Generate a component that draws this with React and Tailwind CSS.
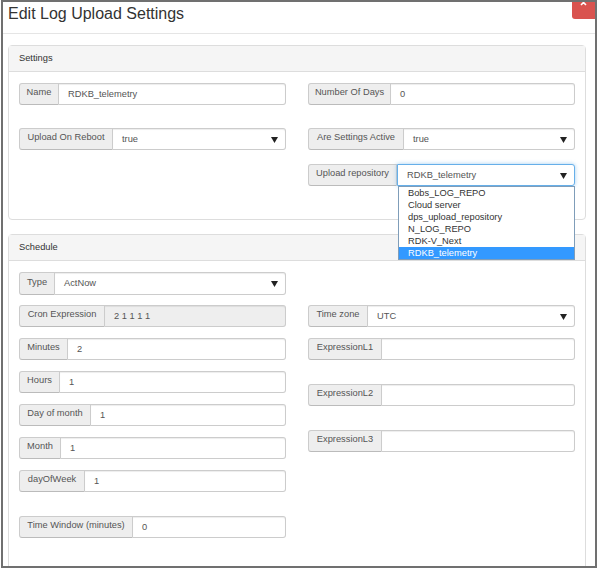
const repos = ['Bobs_LOG_REPO', 'Cloud server', 'dps_upload_repository', 'N_LOG_REPO', 'RDK-V_Next', 'RDKB_telemetry']

function Arrow() {
  return (
    <svg width="7" height="6" viewBox="0 0 7 6" className="shrink-0">
      <path d="M0 0 H7 L3.5 6 Z" fill="#222" />
    </svg>
  )
}

function Field({ label, w, value = '', select, readOnly, focus, className = '', children }) {
  const box = focus
    ? 'border border-[#66afe9] shadow-[0_0_4px_rgba(102,175,233,0.6)]'
    : 'border border-l-0 border-[#ccc] shadow-[inset_0_1px_1px_rgba(0,0,0,0.075)]'
  return (
    <div className={`flex h-[22px] w-[267px] text-[9.3px] text-[#555] ${className}`}>
      <div className={`flex shrink-0 items-center justify-center whitespace-nowrap rounded-l-[3px] border border-[#ccc] border-b-[#bbb] bg-[#eee] pb-[2px] ${w}`}>
        {label}
      </div>
      <div className={`relative flex flex-1 items-center rounded-r-[3px] pl-[9px] pr-[7px] pt-[1px] ${box} ${readOnly ? 'bg-[#eee]' : 'bg-white'}`}>
        <span className="flex-1 whitespace-nowrap">{value}</span>
        {select && <Arrow />}
        {children}
      </div>
    </div>
  )
}

function Panel({ title, className = '', children }) {
  return (
    <div className={`ml-[5px] w-[578px] rounded-[4px] border border-[#ddd] ${className}`}>
      <div className="flex h-[26px] items-center border-b border-[#ddd] bg-[#f5f5f5] pl-[10px] text-[9.3px] text-[#333]">
        {title}
      </div>
      {children}
    </div>
  )
}

export default function App() {
  return (
    <div className="h-[569px] w-[599px] bg-white" style={{ fontFamily: '"Liberation Sans", Arial, sans-serif' }}>
      <div className="relative ml-px h-[568px] w-[596px] overflow-hidden border-2 border-[#707070] bg-white">
        {/* close button, glyph clipped by the frame top */}
        <div className="absolute right-0 top-[-2px] flex h-[19px] w-[23px] justify-center overflow-hidden rounded-bl-[3px] bg-[#d9534f]">
          <svg width="7" height="7" viewBox="0 0 7 7" className="mt-[-1px]">
            <path d="M1 1 L6 6 M6 1 L1 6" stroke="#fff" strokeWidth="1.6" />
          </svg>
        </div>

        <div className="flex h-[32px] items-start border-b border-[#e5e5e5] pl-[5px] pt-[2px]">
          <h1 className="text-[16px] leading-[20px] text-[#333]">Edit Log Upload Settings</h1>
        </div>

        <Panel title="Settings" className="mt-[11px]">
          <div className="flex gap-[22px] px-[10px] pb-[33px] pt-[11px]">
            <div className="flex flex-col">
              <Field label="Name" w="w-[40px]" value="RDKB_telemetry" />
              <Field label="Upload On Reboot" w="w-[94px]" value="true" select className="mt-[23px]" />
            </div>
            <div className="flex flex-col">
              <Field label="Number Of Days" w="w-[83px]" value="0" />
              <Field label="Are Settings Active" w="w-[96px]" value="true" select className="mt-[23px]" />
              <Field label="Upload repository" w="w-[89px]" value="RDKB_telemetry" select focus className="z-10 mt-[14px]">
                <div className="absolute left-0 right-[-1px] top-[21px] border border-[#7f9db9] bg-white text-[9.3px] text-[#333]">
                  {repos.map((r) => (
                    <div
                      key={r}
                      className={`h-[12px] pl-[9px] leading-[12px] ${r === 'RDKB_telemetry' ? 'bg-[#3399ff] text-white' : ''}`}
                    >
                      {r}
                    </div>
                  ))}
                </div>
              </Field>
            </div>
          </div>
        </Panel>

        <Panel title="Schedule" className="mt-[14px]">
          <div className="flex gap-[22px] px-[10px] pb-[40px] pt-[11px]">
            <div className="flex flex-col">
              <Field label="Type" w="w-[36px]" value="ActNow" select className="h-[23px]" />
              <Field label="Cron Expression" w="w-[86px]" value="2 1 1 1 1" readOnly className="mt-[10px]" />
              <Field label="Minutes" w="w-[49px]" value="2" className="mt-[11px]" />
              <Field label="Hours" w="w-[41px]" value="1" className="mt-[11px]" />
              <Field label="Day of month" w="w-[72px]" value="1" className="mt-[11px]" />
              <Field label="Month" w="w-[42px]" value="1" className="mt-[11px]" />
              <Field label="dayOfWeek" w="w-[66px]" value="1" className="mt-[11px]" />
              <Field label="Time Window (minutes)" w="w-[114px]" value="0" className="mt-[24px]" />
            </div>
            <div className="flex flex-col">
              <Field label="Time zone" w="w-[60px]" value="UTC" select className="mt-[33px]" />
              <Field label="ExpressionL1" w="w-[74px]" className="mt-[11px]" />
              <Field label="ExpressionL2" w="w-[74px]" className="mt-[24px]" />
              <Field label="ExpressionL3" w="w-[74px]" className="mt-[24px]" />
            </div>
          </div>
        </Panel>
      </div>
    </div>
  )
}
